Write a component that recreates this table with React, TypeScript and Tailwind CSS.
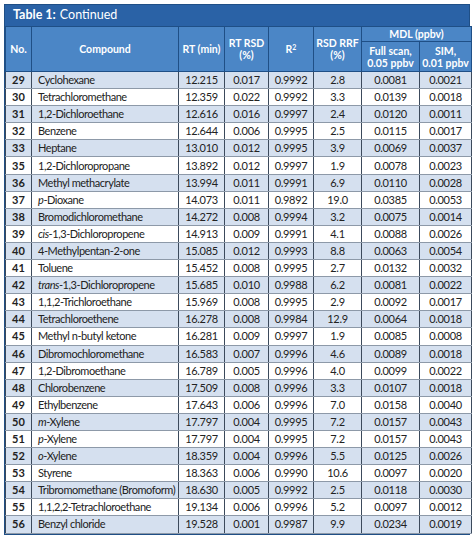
const ROWS: [string, string, string, string, string, string, string, string][] = [
  ["29", "Cyclohexane", "12.215", "0.017", "0.9992", "2.8", "0.0081", "0.0021"],
  ["30", "Tetrachloromethane", "12.359", "0.022", "0.9992", "3.3", "0.0139", "0.0018"],
  ["31", "1,2-Dichloroethane", "12.616", "0.016", "0.9997", "2.4", "0.0120", "0.0011"],
  ["32", "Benzene", "12.644", "0.006", "0.9995", "2.5", "0.0115", "0.0017"],
  ["33", "Heptane", "13.010", "0.012", "0.9995", "3.9", "0.0069", "0.0037"],
  ["35", "1,2-Dichloropropane", "13.892", "0.012", "0.9997", "1.9", "0.0078", "0.0023"],
  ["36", "Methyl methacrylate", "13.994", "0.011", "0.9991", "6.9", "0.0110", "0.0028"],
  ["37", "p-|Dioxane", "14.073", "0.011", "0.9892", "19.0", "0.0385", "0.0053"],
  ["38", "Bromodichloromethane", "14.272", "0.008", "0.9994", "3.2", "0.0075", "0.0014"],
  ["39", "cis-|1,3-Dichloropropene", "14.913", "0.009", "0.9991", "4.1", "0.0088", "0.0026"],
  ["40", "4-Methylpentan-2-one", "15.085", "0.012", "0.9993", "8.8", "0.0063", "0.0054"],
  ["41", "Toluene", "15.452", "0.008", "0.9995", "2.7", "0.0132", "0.0032"],
  ["42", "trans-|1,3-Dichloropropene", "15.685", "0.010", "0.9988", "6.2", "0.0081", "0.0022"],
  ["43", "1,1,2-Trichloroethane", "15.969", "0.008", "0.9995", "2.9", "0.0092", "0.0017"],
  ["44", "Tetrachloroethene", "16.278", "0.008", "0.9984", "12.9", "0.0064", "0.0018"],
  ["45", "Methyl n-butyl ketone", "16.281", "0.009", "0.9997", "1.9", "0.0085", "0.0008"],
  ["46", "Dibromochloromethane", "16.583", "0.007", "0.9996", "4.6", "0.0089", "0.0018"],
  ["47", "1,2-Dibromoethane", "16.789", "0.005", "0.9996", "4.0", "0.0099", "0.0022"],
  ["48", "Chlorobenzene", "17.509", "0.008", "0.9996", "3.3", "0.0107", "0.0018"],
  ["49", "Ethylbenzene", "17.643", "0.006", "0.9996", "7.0", "0.0158", "0.0040"],
  ["50", "m-|Xylene", "17.797", "0.004", "0.9995", "7.2", "0.0157", "0.0043"],
  ["51", "p-|Xylene", "17.797", "0.004", "0.9995", "7.2", "0.0157", "0.0043"],
  ["52", "o-|Xylene", "18.359", "0.004", "0.9996", "5.5", "0.0125", "0.0026"],
  ["53", "Styrene", "18.363", "0.006", "0.9990", "10.6", "0.0097", "0.0020"],
  ["54", "Tribromomethane (Bromoform)", "18.630", "0.005", "0.9992", "2.5", "0.0118", "0.0030"],
  ["55", "1,1,2,2-Tetrachloroethane", "19.134", "0.006", "0.9996", "5.2", "0.0097", "0.0012"],
  ["56", "Benzyl chloride", "19.528", "0.001", "0.9987", "9.9", "0.0234", "0.0019"],
];

const Compound = ({ name }: { name: string }) => {
  const parts = name.split("|");
  if (parts.length === 1) return <>{name}</>;
  return (
    <>
      <i>{parts[0].slice(0, -1)}</i>-{parts[1]}
    </>
  );
};

const th = "border border-[#1f4f86] text-white font-bold text-[10.5px] leading-[12px] text-center align-middle p-0";
const td = "border-x border-[#3c4a5c] border-y border-y-[#8d99a8] text-[11px] leading-[12px] tracking-[-0.3px] text-[#222] text-center align-middle p-0 h-[17.1px]";

export default function App() {
  return (
    <div className="w-[474px] h-[539px] bg-white pl-[4px] pt-[4px]" style={{ fontFamily: "Lato, 'Liberation Sans', sans-serif" }}>
      <div className="w-[466px] border border-[#1f4f86]">
        <div className="h-[21px] bg-[#2a62a6] flex items-center pl-[8px] text-white text-[12.5px]">
          <span className="font-bold mr-[4px]">Table 1:</span>
          <span>Continued</span>
        </div>
        <table className="w-full border-collapse table-fixed">
          <colgroup>
            <col className="w-[26px]" />
            <col className="w-[147px]" />
            <col className="w-[46px]" />
            <col className="w-[44px]" />
            <col className="w-[45px]" />
            <col className="w-[48px]" />
            <col className="w-[58px]" />
            <col className="w-[52px]" />
          </colgroup>
          <thead className="bg-[#4b86c6]">
            <tr className="h-[15px]">
              <th rowSpan={2} className={th}>No.</th>
              <th rowSpan={2} className={th}>Compound</th>
              <th rowSpan={2} className={th}>RT (min)</th>
              <th rowSpan={2} className={th}>RT RSD<br />(%)</th>
              <th rowSpan={2} className={th}>R<sup className="text-[7px]">2</sup></th>
              <th rowSpan={2} className={th}>RSD RRF<br />(%)</th>
              <th colSpan={2} className={th}>MDL (ppbv)</th>
            </tr>
            <tr className="h-[30px]">
              <th className={th}>Full scan,<br />0.05 ppbv</th>
              <th className={th}>SIM,<br />0.01 ppbv</th>
            </tr>
          </thead>
          <tbody>
            {ROWS.map((r, i) => (
              <tr key={r[0]} className={i % 2 === 0 ? "bg-[#d5e0ef]" : "bg-white"}>
                <td className={`${td} font-bold tracking-normal`}>{r[0]}</td>
                <td className={`${td} text-left pl-[6px] whitespace-nowrap tracking-[-0.45px]`}><Compound name={r[1]} /></td>
                {r.slice(2).map((v, j) => (
                  <td key={j} className={td}>{v}</td>
                ))}
              </tr>
            ))}
          </tbody>
        </table>
      </div>
    </div>
  );
}
